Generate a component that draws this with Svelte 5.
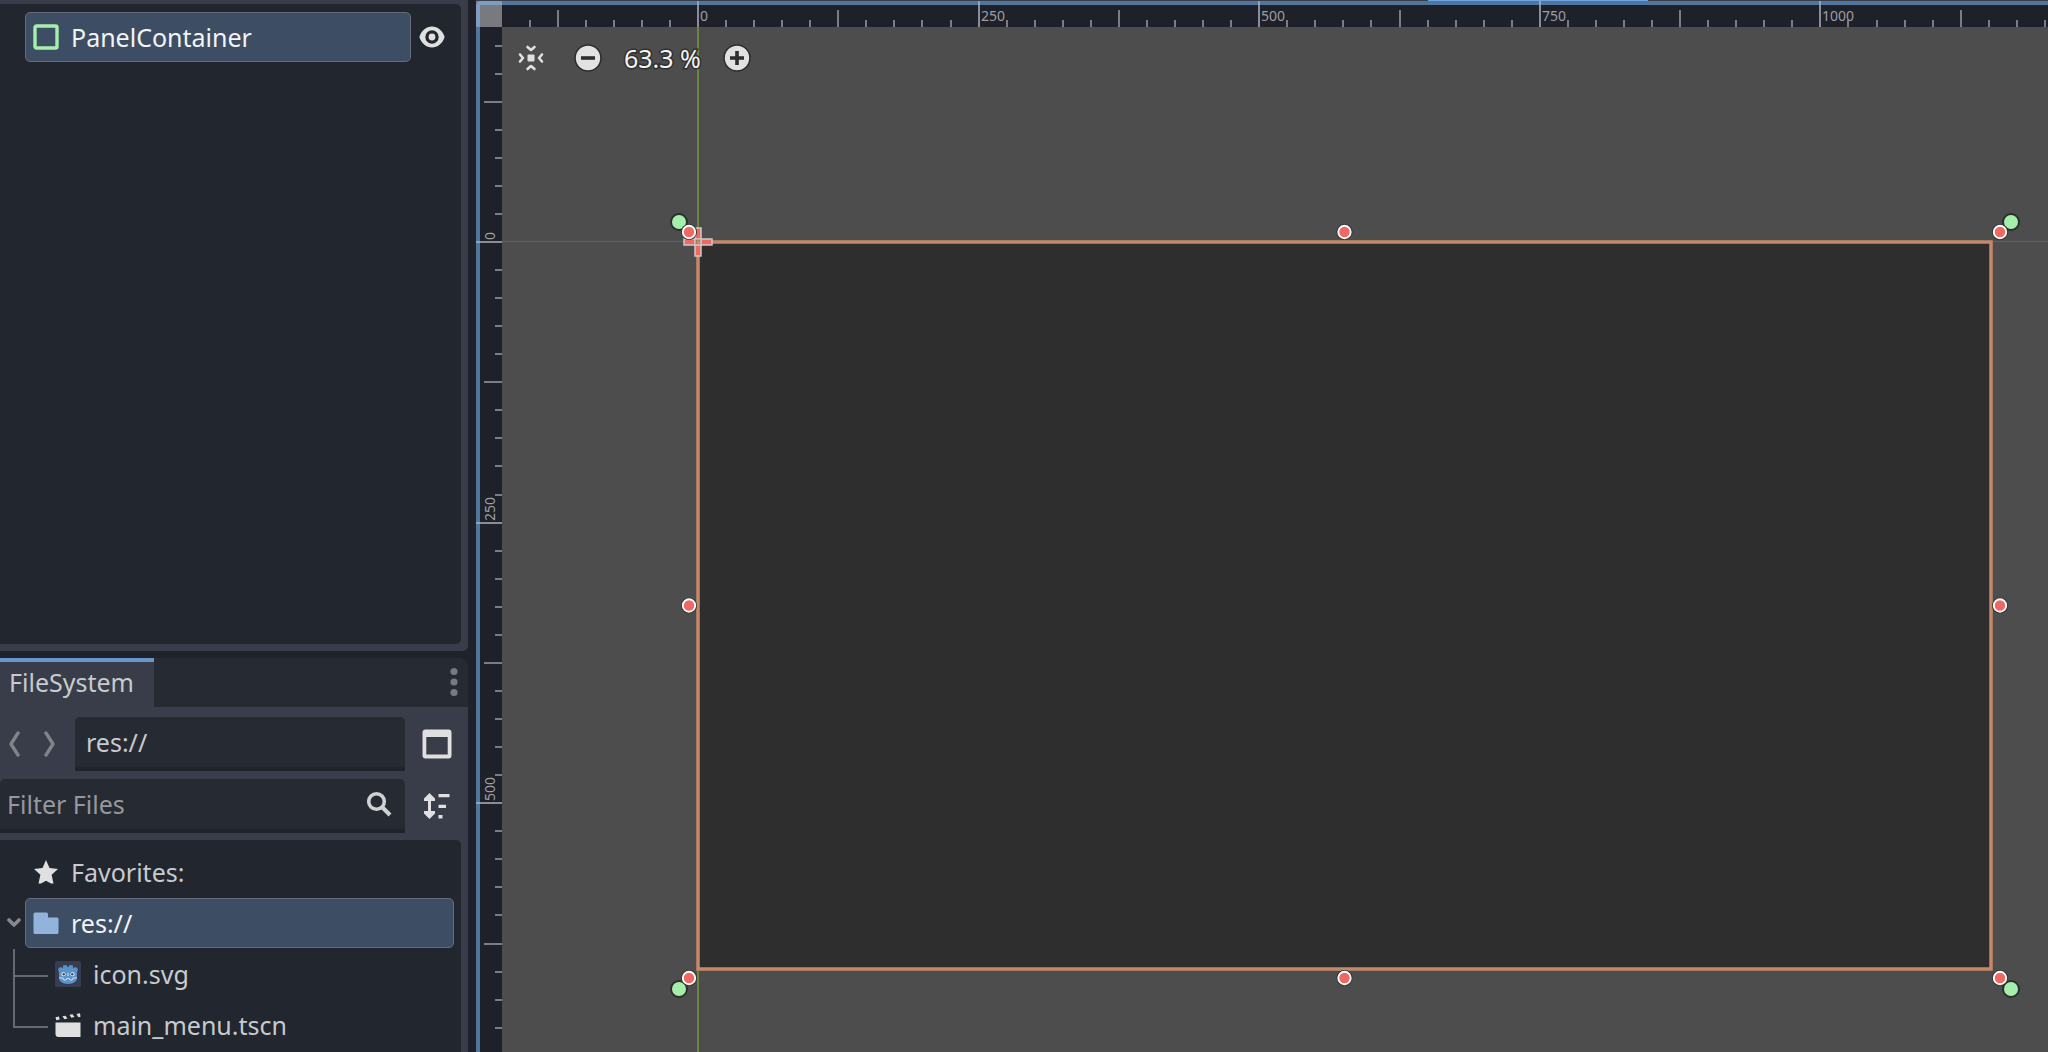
<script>
  const originX = 222;
  const originY = 241;
  const unit = 1.1224;
  const sceneWidth = 1293;
  const sceneHeight = 727;

  let stageWidth = $state(0);
  let stageHeight = $state(0);

  // One tick every 25 scene units; every 5th is longer, every 10th is labelled.
  function makeTicks(from, origin, size) {
    const list = [];
    for (let i = from; origin + i * 25 * unit < size; i++) {
      list.push({
        at: Math.round(origin + i * 25 * unit),
        kind: i % 10 === 0 ? 'major' : i % 5 === 0 ? 'half' : 'minor',
        label: i * 25
      });
    }
    return list;
  }

  const columns = $derived(makeTicks(-6, originX, stageWidth));
  const lines = $derived(makeTicks(-7, originY, stageHeight));

  const x0 = originX - 9;
  const x1 = originX + sceneWidth + 9;
  const y0 = originY - 10;
  const y1 = originY + sceneHeight + 9;
  const midX = originX + sceneWidth / 2;
  const midY = originY + sceneHeight / 2;

  const handles = [
    [x0, y0], [midX, y0], [x1, y0],
    [x0, midY], [x1, midY],
    [x0, y1], [midX, y1], [x1, y1]
  ];
  const anchors = [
    [x0 - 10, y0 - 10], [x1 + 11, y0 - 10],
    [x0 - 10, y1 + 11], [x1 + 11, y1 + 11]
  ];

  let path = $state('res://');
  let filter = $state('');
</script>

<div class="editor">
  <aside class="docks">
    <section class="dock scene" aria-label="Scene">
      <div class="tree">
        <div class="row">
          <button class="item selected">
            <svg width="26" height="26" viewBox="0 0 26 26" fill="none" stroke="#a5efac" stroke-width="3.4"><rect x="2" y="2" width="22" height="22" rx="1.5" /></svg>
            <span>PanelContainer</span>
          </button>
          <button class="icon eye" aria-label="Toggle visibility">
            <svg width="26" height="26" viewBox="0 0 26 26"><path fill="#e0e0e0" fill-rule="evenodd" d="M13 2.4C7.400 2.400 2.600 6.500.600 12.200q-.300.800 0 1.600C2.600 19.500 7.400 23.600 13 23.600s10.400-4.100 12.400-9.800q.300-.800 0-1.600C23.400 6.500 18.600 2.400 13 2.400zM13 6.300a6.700 6.700 0 1 1 0 13.400a6.700 6.700 0 1 1 0-13.400zM13 9.600a3.400 3.400 0 1 0 0 6.800a3.400 3.400 0 1 0 0-6.800z" /></svg>
          </button>
        </div>
      </div>
    </section>

    <section class="dock files" aria-label="FileSystem">
      <div class="tabbar">
        <button class="tab">FileSystem</button>
        <button class="icon dots" aria-label="Dock options">
          <svg width="8" height="30" viewBox="0 0 8 30" fill="#777b81"><circle cx="4" cy="4.500" r="3.600" /><circle cx="4" cy="15" r="3.600" /><circle cx="4" cy="25.500" r="3.600" /></svg>
        </button>
      </div>
      <div class="tools first">
        <div class="nav">
          <button class="icon" aria-label="Back"><svg width="12" height="26" viewBox="0 0 12 26"><path d="M10 2 3 13l7 11" fill="none" stroke="#7f838a" stroke-width="3.400" stroke-linecap="round" stroke-linejoin="round" /></svg></button>
          <button class="icon" aria-label="Forward"><svg width="12" height="26" viewBox="0 0 12 26"><path d="m2 2 7 11-7 11" fill="none" stroke="#7f838a" stroke-width="3.400" stroke-linecap="round" stroke-linejoin="round" /></svg></button>
        </div>
        <input class="field path" aria-label="Path" bind:value={path} />
        <button class="icon side" aria-label="Split mode">
          <svg width="30" height="30" viewBox="0 0 30 30"><path fill="#e0e0e0" fill-rule="evenodd" d="M3.500.500h23a3 3 0 0 1 3 3v23a3 3 0 0 1-3 3h-23a3 3 0 0 1-3-3v-23a3 3 0 0 1 3-3zM4.300 8v17.500h21.400V8z" /></svg>
        </button>
      </div>
      <div class="tools">
        <label class="field search">
          <input aria-label="Filter Files" placeholder="Filter Files" bind:value={filter} />
          <svg width="26" height="26" viewBox="0 0 26 26" fill="none" stroke="#d0d1d3"><circle cx="10.500" cy="10.500" r="7.800" stroke-width="3.600" /><path d="m16 16 8 8" stroke-width="4" /></svg>
        </label>
        <button class="icon side" aria-label="Sort files">
          <svg width="26" height="26" viewBox="0 0 26 26" fill="#e0e0e0"><path d="M4 6h3v14H4z" /><path d="M5.500 0 11 5.500V8H0V5.500zM5.500 26 0 20.500V18h11v2.500z" /><path d="M14.500 1h11v3.200h-11zM14.500 11.800h7.500V15h-7.500zM14.500 22h4v3.400h-4z" /></svg>
        </button>
      </div>
      <div class="tree list">
        <button class="item">
          <svg width="26" height="26" viewBox="0 0 26 26"><path fill="#e0e0e0" d="m13 1 3.500 8 8.500.900-6.400 5.800 1.900 8.800H18L13 21.700 8 24.500H5.500l1.900-8.800L1 9.900 9.500 9z" /></svg>
          <span>Favorites:</span>
        </button>
        <div class="branch">
          <svg class="chevron" width="14" height="10" viewBox="0 0 14 10"><path d="m2 2 5 5 5-5" fill="none" stroke="#87898d" stroke-width="3.600" stroke-linecap="round" stroke-linejoin="round" /></svg>
          <button class="item selected">
            <svg width="26" height="26" viewBox="0 0 26 26"><path fill="#92b4da" d="M2 2.500h11.500q1.500 0 1.500 1.500v3.500h9q1.500 0 1.500 1.500v13.500q0 1.500-1.500 1.500H2Q.500 24 .500 22.500V4Q.500 2.500 2 2.500z" /></svg>
            <span>res://</span>
          </button>
        </div>
        <div class="children">
          <button class="item child">
            <svg width="26" height="26" viewBox="0 0 26 26">
              <rect width="26" height="26" rx="2" fill="#363d52" />
              <path fill="#5a93cc" d="m3 8 2.500-2 2.500 1.200V4.500L11.500 4l1 2h1l1-2 3.500.500v2.700L20.500 6 23 8l-1 3v5q0 7-9 7t-9-7v-5z" />
              <path d="M4 17h4l.800 2h2.400l.600-1.600h2.400l.600 1.600h2.400l.800-2h4" fill="none" stroke="#dfe8f2" stroke-width=".9" />
              <circle cx="8.500" cy="13.300" r="2" fill="#fff" /><circle cx="17.500" cy="13.300" r="2" fill="#fff" />
              <circle cx="8.700" cy="13.300" r="1.200" fill="#414042" /><circle cx="17.300" cy="13.300" r="1.200" fill="#414042" />
              <path d="M13 12v3" stroke="#dfe8f2" stroke-width="1" />
            </svg>
            <span>icon.svg</span>
          </button>
          <button class="item child last">
            <svg width="26" height="26" viewBox="0 0 26 26" fill="#e0e0e0"><path d="M.500 10.500h25V25H3.500q-3 0-3-3zM.500 5.300l3.400-.700.800 3-3.400.700zM7.500 4.300l3-.600 2 2.900-3.200.700zM14.500 2.800l3-.600 2 2.900-3.200.700zM21.500 2l3.500-.700.500 3.500-2.200.500z" /></svg>
            <span>main_menu.tscn</span>
          </button>
        </div>
      </div>
    </section>
  </aside>

  <main class="viewport">
    <div class="strip"><div class="strip-tab"></div></div>
    <div class="stage" bind:clientWidth={stageWidth} bind:clientHeight={stageHeight}>
      <svg class="canvas" width="100%" height="100%" aria-label="Canvas">
        <rect width="100%" height="100%" fill="#4d4d4d" />
        <rect x={originX} y={originY} width={sceneWidth} height={sceneHeight} fill="#2e2e2e" />
        <path d="M{originX} 26V{originY}M{originX} {originY + sceneHeight}V3000" stroke="#69873f" stroke-width="2" />
        <path d="M26 {originY - 0.5}H{originX}M{originX + sceneWidth} {originY - 0.5}H6000" stroke="#a04652" />
        <rect x={originX} y={originY} width={sceneWidth} height={sceneHeight} fill="none" stroke="#c5886a" stroke-width="3.500" />
        <g fill="#ee6963" stroke="#d0c9c8" stroke-width="1.500">
          <rect x={originX - 14} y={originY - 3} width="11" height="6" />
          <rect x={originX + 3} y={originY - 3} width="11" height="6" />
          <rect x={originX - 3} y={originY - 14} width="6" height="11" />
          <rect x={originX - 3} y={originY + 3} width="6" height="11" />
        </g>
        {#each anchors as [x, y]}
          <circle cx={x} cy={y} r="8" fill="#a5efac" stroke="#2c2f2c" stroke-width="2" />
        {/each}
        {#each handles as [x, y]}
          <circle cx={x} cy={y} r="8" fill="#333" />
          <circle cx={x} cy={y} r="6.200" fill="#ee6963" stroke="#fff" stroke-width="1.900" />
        {/each}

        <rect width="100%" height="26" fill="#1e2129" />
        <rect width="26" height="100%" fill="#1e2129" />
        <path d="M2 3000V5q0-3 3-3H6000" fill="none" stroke="#52759c" stroke-width="4" />
        <g class="ruler">
          {#each columns as tick}
            {#if tick.at > 26}
              <rect x={tick.at - 1} y={tick.kind === 'major' ? 0 : tick.kind === 'half' ? 9 : 19} width="2" height="100" class={tick.kind} clip-path="url(#top-ruler)" />
              {#if tick.kind === 'major'}<text x={tick.at + 2} y="20">{tick.label}</text>{/if}
            {/if}
          {/each}
          {#each lines as tick}
            {#if tick.at > 26}
              <rect x={tick.kind === 'major' ? 0 : tick.kind === 'half' ? 8 : 19} y={tick.at - 1} width="100" height="2" class={tick.kind} clip-path="url(#left-ruler)" />
              {#if tick.kind === 'major'}<text transform="translate(19 {tick.at - 2}) rotate(-90)">{tick.label}</text>{/if}
            {/if}
          {/each}
        </g>
        <clipPath id="top-ruler"><rect width="6000" height="26" /></clipPath>
        <clipPath id="left-ruler"><rect width="26" height="3000" /></clipPath>
        <rect width="26" height="26" fill="#787a80" />
        <path d="M2 26V5q0-3 3-3H26" fill="none" stroke="#7f9cc3" stroke-width="4" />
      </svg>
      <div class="zoombar">
        <button class="icon" aria-label="Center view">
          <svg width="26" height="26" viewBox="0 0 26 26"><rect x="9.500" y="9.500" width="7" height="7" rx="1" fill="#e0e0e0" /><path d="m9.500 2 3.500 3 3.500-3M9.500 24l3.500-3 3.500 3M2 9.500 5 13l-3 3.500M24 9.500 21 13l3 3.500" fill="none" stroke="#e0e0e0" stroke-width="2.600" stroke-linecap="round" stroke-linejoin="round" /></svg>
        </button>
        <div class="zoom">
          <button class="icon" aria-label="Zoom out">
            <svg width="28" height="28" viewBox="0 0 28 28"><circle cx="14" cy="14" r="13" fill="#e2e2e2" stroke="#2e2e2e" stroke-width="1.600" /><path d="M7 14h14" stroke="#2e2e2e" stroke-width="3.600" /></svg>
          </button>
          <button class="icon level">63.3 %</button>
          <button class="icon" aria-label="Zoom in">
            <svg width="28" height="28" viewBox="0 0 28 28"><circle cx="14" cy="14" r="13" fill="#e2e2e2" stroke="#2e2e2e" stroke-width="1.600" /><path d="M7 14h14M14 7v14" stroke="#2e2e2e" stroke-width="3.600" /></svg>
          </button>
        </div>
      </div>
    </div>
  </main>
</div>

<style>
  :global(body) { background: #1f222a; }
  * { box-sizing: border-box; }
  .editor {
    display: grid;
    grid-template-columns: 468px 1fr;
    gap: 8px;
    height: 100vh;
    overflow: hidden;
    background: #1f222a;
    color: #c8cacd;
    font: 25px/32px "Noto Sans", sans-serif;
  }
  button, input {
    margin: 0;
    padding: 0;
    border: 0;
    background: none;
    color: inherit;
    font: inherit;
    text-align: left;
  }
  svg { display: block; flex: none; }
  .docks {
    display: flex;
    flex-direction: column;
    gap: 7px;
    min-height: 0;
  }
  .dock { background: #383d49; }
  .scene {
    display: flex;
    flex: 1;
    padding: 4px 7px 7px 0;
    border-radius: 0 0 5px 0;
  }
  .files { border-radius: 0 10px 0 0; overflow: hidden; }
  .tree {
    flex: 1;
    padding: 8px 7px 0 0;
    background: #22262e;
    border-radius: 0 5px 5px 0;
  }
  .row { display: flex; align-items: center; gap: 8px; padding-left: 25px; }
  .item {
    display: flex;
    flex: 1;
    align-items: center;
    gap: 12px;
    height: 50px;
    padding: 0 7px;
    border: 1px solid transparent;
    border-radius: 5px;
  }
  .selected { background: #3d4e64; border-color: #656c78; color: #f3f4f5; }
  .eye { margin-right: 9px; }
  .icon { display: flex; align-items: center; justify-content: center; }
  .tabbar { display: flex; justify-content: space-between; height: 49px; background: #262a32; }
  .tab {
    padding: 0 20px 5px 9px;
    border-top: 4px solid #6a95ca;
    background: #383d49;
  }
  .dots { margin: 0 10px 2px 0; }
  .tools { display: flex; height: 54px; margin-top: 8px; }
  .first { margin-top: 10px; }
  .nav { display: flex; align-items: center; justify-content: space-between; width: 75px; padding: 0 19px 0 8px; }
  .field {
    flex: 1;
    min-width: 0;
    background: #262a32;
    border-bottom: 4px solid #202329;
    border-radius: 5px 5px 0 0;
  }
  .path { padding: 0 11px; }
  .side { width: 63px; }
  .search { display: flex; align-items: center; padding: 0 13px 0 7px; }
  .search input { flex: 1; min-width: 0; }
  .search input::placeholder { color: #95989d; opacity: 1; }
  .list { display: grid; gap: 1px; margin: 7px 7px 0 0; padding: 7px 7px 2px 0; border-radius: 0 5px 0 0; }
  .list > .item { margin-left: 25px; }
  .branch { display: flex; align-items: center; gap: 4px; padding-left: 7px; }
  .children { display: grid; padding-left: 13px; row-gap: 1px; }
  .child { position: relative; padding-left: 41px; padding-right: 0; }
  .child::before {
    content: "";
    position: absolute;
    left: -1px;
    top: -1px;
    width: 33px;
    height: 26px;
    border-left: 2px solid #66696e;
    border-bottom: 2px solid #66696e;
  }
  .child.last::before { top: -27px; height: 52px; }
  .viewport { display: flex; flex-direction: column; min-width: 0; }
  .strip { display: flex; height: 1px; background: #3a3f4b; }
  .strip-tab { width: 220px; margin-left: 952px; background: #6ea6e6; }
  .stage { position: relative; flex: 1; min-height: 0; }
  .canvas { position: absolute; inset: 0; }
  .ruler rect { fill: #9a9ca0; opacity: 0.75; }
  .ruler .major { fill: #a9b3c0; }
  .ruler text { fill: #9c9ea2; font-size: 14px; }
  .zoombar { position: absolute; left: 42px; top: 41px; display: flex; align-items: center; gap: 30px; }
  .zoom { display: flex; align-items: center; gap: 22px; }
  .level {
    color: #f4f4f4;
    height: 32px;
    paint-order: stroke fill;
    -webkit-text-stroke: 3px #303030;
  }
</style>
